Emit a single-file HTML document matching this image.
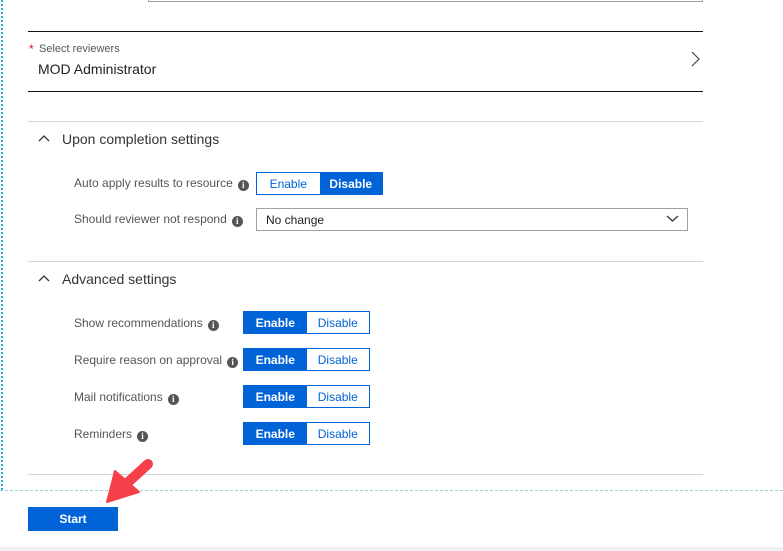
<!DOCTYPE html>
<html><head><meta charset="utf-8"><style>
*{margin:0;padding:0;box-sizing:border-box}
body{width:783px;height:551px;position:relative;overflow:hidden;background:#fff;font-family:"Liberation Sans",sans-serif;color:#333}
.a{position:absolute}
.lbl{position:absolute;font-size:12px;color:#555;left:74px;line-height:14px}
.info{display:inline-block;width:11px;height:11px;border-radius:50%;background:#555;color:#fff;font-size:9px;font-weight:bold;text-align:center;line-height:11px;vertical-align:-1px;margin-left:5px;font-family:"Liberation Serif",serif}
.tg{position:absolute;height:23px;border:1px solid #0063d8;display:flex;font-size:12px}
.tg div{flex:1;text-align:center;line-height:22px}
.on{background:#0063d8;color:#fff;font-weight:bold}
.off{background:#fff;color:#0063d8}
.hl{position:absolute;left:28px;width:675px;height:1px}
</style></head><body>
<div class="a" style="left:148px;top:-5px;width:555px;height:7px;border:1px solid #a0a0a0;border-top:none"></div>
<div class="a" style="left:1px;top:0;height:490px;border-left:2px dotted #2aa8d8"></div>
<div class="a" style="left:0;top:490px;width:783px;border-top:1px dashed #9ccfd8"></div>
<div class="a" style="left:0;top:547px;width:783px;height:4px;background:#f0f0f0"></div>
<div class="hl" style="top:31px;background:#111"></div>
<div class="hl" style="top:91px;background:#111"></div>
<div class="hl" style="top:121px;background:#d6d6d6"></div>
<div class="hl" style="top:261px;background:#d6d6d6"></div>
<div class="hl" style="top:474px;background:#d6d6d6"></div>
<div class="a" style="left:29px;top:42px;font-size:12px;color:#e81123">*</div>
<div class="a" style="left:39px;top:43px;font-size:11px;color:#555">Select reviewers</div>
<div class="a" style="left:38px;top:61px;font-size:14px;color:#222">MOD Administrator</div>
<svg class="a" style="left:690px;top:51px" width="12" height="17"><path d="M2 1 L9 8 L2 15" fill="none" stroke="#444" stroke-width="1.2"/></svg>
<svg class="a" style="left:38px;top:133px" width="14" height="10"><path d="M1 8 L6 3 L11 8" fill="none" stroke="#333" stroke-width="1.3"/></svg>
<div class="a" style="left:62px;top:131px;font-size:14px">Upon completion settings</div>
<svg class="a" style="left:38px;top:273px" width="14" height="10"><path d="M1 8 L6 3 L11 8" fill="none" stroke="#333" stroke-width="1.3"/></svg>
<div class="a" style="left:62px;top:271px;font-size:14px">Advanced settings</div>
<div class="lbl" style="top:176px">Auto apply results to resource<span class="info">i</span></div>
<div class="tg" style="left:256px;top:172px;width:127px"><div class="off">Enable</div><div class="on">Disable</div></div>
<div class="lbl" style="top:212px">Should reviewer not respond<span class="info">i</span></div>
<div class="a" style="left:256px;top:208px;width:432px;height:23px;border:1px solid #a0a0a0;font-size:12px;color:#222;padding-left:9px;line-height:22px">No change</div>
<svg class="a" style="left:666px;top:214px" width="14" height="10"><path d="M1 2 L6.5 7 L12 2" fill="none" stroke="#333" stroke-width="1.3"/></svg>
<div class="lbl" style="top:316px">Show recommendations<span class="info">i</span></div>
<div class="tg" style="left:243px;top:311px;width:127px"><div class="on">Enable</div><div class="off">Disable</div></div>
<div class="lbl" style="top:353px">Require reason on approval<span class="info">i</span></div>
<div class="tg" style="left:243px;top:348px;width:127px"><div class="on">Enable</div><div class="off">Disable</div></div>
<div class="lbl" style="top:390px">Mail notifications<span class="info">i</span></div>
<div class="tg" style="left:243px;top:385px;width:127px"><div class="on">Enable</div><div class="off">Disable</div></div>
<div class="lbl" style="top:427px">Reminders<span class="info">i</span></div>
<div class="tg" style="left:243px;top:422px;width:127px"><div class="on">Enable</div><div class="off">Disable</div></div>
<div class="a" style="left:28px;top:507px;width:90px;height:24px;background:#0063d8;color:#fff;font-weight:bold;font-size:12px;text-align:center;line-height:25px">Start</div>
<svg class="a" style="left:95px;top:450px" width="70" height="60"><path d="M53 14 L30 35" stroke="#f5404a" stroke-width="10" stroke-linecap="round"/><path d="M12 52 L20 21 L44 42 Z" fill="#f5404a" stroke="#f5404a" stroke-width="2" stroke-linejoin="round"/></svg>
</body></html>
